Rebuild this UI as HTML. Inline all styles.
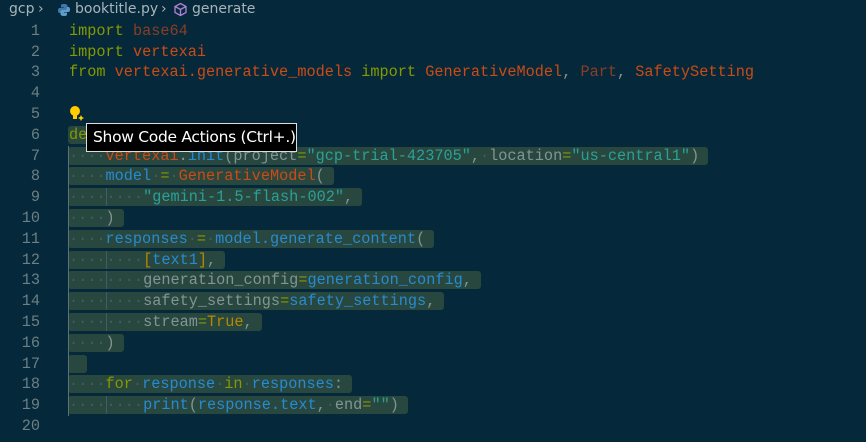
<!DOCTYPE html>
<html><head><meta charset="utf-8"><style>
html,body{margin:0;padding:0;background:#05293a;width:866px;height:442px;overflow:hidden}
.bc{position:absolute;top:0;left:9px;height:20px;font:14px "DejaVu Sans","Liberation Sans",sans-serif;color:#a8b4ba;line-height:19px;white-space:nowrap}
.bc span{position:absolute;top:0}
.ln{position:absolute;left:0;width:40px;font:15.23px "Liberation Mono",monospace;color:#6c7f85}
.ln .row{left:0;width:40px;text-align:right}
.cd{position:absolute;left:69px;font:15.23px "Liberation Mono",monospace;color:#839496;white-space:pre}
.row{position:absolute;height:21px;line-height:21px;white-space:pre}
.s{background:#28473f;border-radius:3px;padding-right:9px;margin-left:-1px;padding-left:1px}
.d{color:#3d5e63}
.k{color:#859900}.m{color:#cb4b16}.md{color:#8a3d26}.b{color:#268bd2}.st{color:#2aa198}.y{color:#b58900}
.g{border-left:1px solid #3f5d62}
.tip{position:absolute;left:86px;top:123px;width:209px;height:27px;background:#000;border:1px solid #ddd;color:#fff;font:15.5px "DejaVu Sans","Liberation Sans",sans-serif;line-height:27px;padding-left:6px;box-sizing:border-box;width:211px;height:29px;white-space:nowrap;letter-spacing:-0.3px}
</style></head><body>
<div class="bc">
<span style="left:0">gcp</span><span style="left:29px">›</span>
<svg style="position:absolute;left:48px;top:3px" width="14" height="14" viewBox="0 0 14 14"><path d="M7 1C4 1 4 2 4 3v1.5h3v.5H3C1.5 5 1 6 1 7.5S1.5 10 3 10h1V8.5C4 7.5 5 7 6 7h3c1 0 1.5-.5 1.5-1.5V3C10.5 2 9.5 1 7 1z" fill="#3d7aab"/><path d="M7 13c3 0 3-1 3-2V9.5H7V9h4c1.5 0 2-1 2-2.5S12.5 4 11 4h-1v1.5C10 6.5 9 7 8 7H5c-1 0-1.5.5-1.5 1.5V11C3.5 12 4.5 13 7 13z" fill="#5f9dc9"/></svg>
<span style="left:66px">booktitle.py</span><span style="left:152px">›</span>
<svg style="position:absolute;left:164px;top:2px" width="15" height="15" viewBox="0 0 15 15"><path d="M7.5 1.5l5.5 3v6l-5.5 3-5.5-3v-6z M2 4.5l5.5 3 5.5-3 M7.5 7.5v6" fill="none" stroke="#b180d7" stroke-width="1.3"/></svg>
<span style="left:183px">generate</span>
</div>
<div class="ln">
<div class="row" style="top:21px">1</div><div class="row" style="top:42px">2</div><div class="row" style="top:62px">3</div><div class="row" style="top:83px">4</div><div class="row" style="top:104px">5</div><div class="row" style="top:125px">6</div><div class="row" style="top:146px">7</div><div class="row" style="top:166px">8</div><div class="row" style="top:187px">9</div><div class="row" style="top:208px">10</div><div class="row" style="top:229px">11</div><div class="row" style="top:250px">12</div><div class="row" style="top:270px">13</div><div class="row" style="top:291px">14</div><div class="row" style="top:312px">15</div><div class="row" style="top:333px">16</div><div class="row" style="top:354px">17</div><div class="row" style="top:374px">18</div><div class="row" style="top:395px">19</div><div class="row" style="top:416px">20</div>
</div>
<div class="cd">
<div class="row" style="top:21px"><span class="k">import</span> <span class="md">base64</span></div>
<div class="row" style="top:42px"><span class="k">import</span> <span class="m">vertexai</span></div>
<div class="row" style="top:62px"><span class="k">from</span> <span class="m">vertexai.generative_models</span> <span class="k">import</span> <span class="m">GenerativeModel</span>, <span class="md">Part</span>, <span class="m">SafetySetting</span></div>
<div class="row" style="top:125px"><span class="s"><span class="k">def</span> <span class="b">generate</span>():</span></div>
<div class="row" style="top:146px"><span class="s"><span class="d">····</span><span class="m">vertexai</span>.<span class="b">init</span>(project<span class="k">=</span><span class="st">"gcp-trial-423705"</span>,<span class="d">·</span>location<span class="k">=</span><span class="st">"us-central1"</span>)</span></div>
<div class="row" style="top:166px"><span class="s"><span class="d">····</span><span class="b">model</span><span class="d">·</span><span class="k">=</span><span class="d">·</span><span class="m">GenerativeModel</span>(</span></div>
<div class="row" style="top:187px"><span class="s"><span class="d">····</span><span class="d g">····</span><span class="st">"gemini-1.5-flash-002"</span>,</span></div>
<div class="row" style="top:208px"><span class="s"><span class="d">····</span>)</span></div>
<div class="row" style="top:229px"><span class="s"><span class="d">····</span><span class="b">responses</span><span class="d">·</span><span class="k">=</span><span class="d">·</span><span class="b">model.generate_content</span>(</span></div>
<div class="row" style="top:250px"><span class="s"><span class="d">····</span><span class="d g">····</span><span class="y">[</span><span class="b">text1</span><span class="y">]</span>,</span></div>
<div class="row" style="top:270px"><span class="s"><span class="d">····</span><span class="d g">····</span>generation_config<span class="k">=</span><span class="b">generation_config</span>,</span></div>
<div class="row" style="top:291px"><span class="s"><span class="d">····</span><span class="d g">····</span>safety_settings<span class="k">=</span><span class="b">safety_settings</span>,</span></div>
<div class="row" style="top:312px"><span class="s"><span class="d">····</span><span class="d g">····</span>stream<span class="k">=</span><span class="y">True</span>,</span></div>
<div class="row" style="top:333px"><span class="s"><span class="d">····</span>)</span></div>
<div class="row" style="top:354px"><span class="s"> </span></div>
<div class="row" style="top:374px"><span class="s"><span class="d">····</span><span class="k">for</span><span class="d">·</span><span class="b">response</span><span class="d">·</span><span class="k">in</span><span class="d">·</span><span class="b">responses</span>:</span></div>
<div class="row" style="top:395px"><span class="s"><span class="d">····</span><span class="d g">····</span><span class="b">print</span>(<span class="b">response.text</span>,<span class="d">·</span>end<span class="k">=</span><span class="st">""</span>)</span></div>
</div>
<div style="position:absolute;left:68px;top:146px;width:1px;height:270px;background:#5a7378"></div>
<svg style="position:absolute;left:68px;top:104px" width="18" height="18" viewBox="0 0 18 18"><circle cx="7" cy="7" r="5" fill="#ffcc00"/><rect x="5" y="11" width="4" height="4" fill="#ffcc00"/><path d="M13 11l1 2 2 1-2 1-1 2-1-2-2-1 2-1z" fill="#ffcc00"/></svg>
<div class="tip">Show Code Actions (Ctrl+.)</div>
</body></html>
